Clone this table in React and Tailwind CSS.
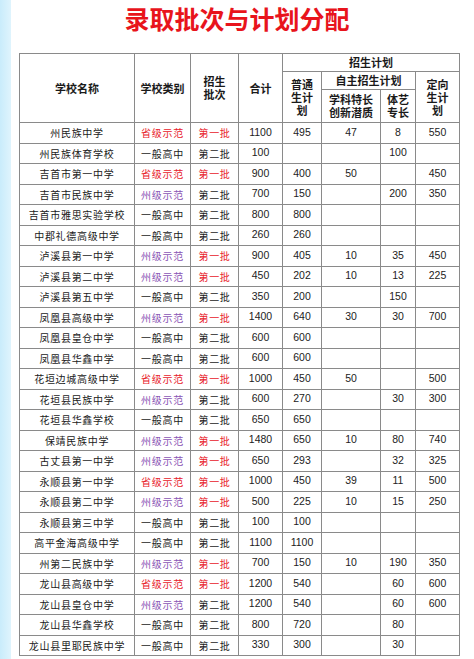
import React from "react";

const RED = "text-[#e8202a]";
const PURPLE = "text-[#8a55b5]";

const rows = [
  ["州民族中学", "省级示范", "第一批", "1100", "495", "47", "8", "550"],
  ["州民族体育学校", "一般高中", "第二批", "100", "", "", "100", ""],
  ["吉首市第一中学", "省级示范", "第一批", "900", "400", "50", "", "450"],
  ["吉首市民族中学", "州级示范", "第二批", "700", "150", "", "200", "350"],
  ["吉首市雅思实验学校", "一般高中", "第二批", "800", "800", "", "", ""],
  ["中郡礼德高级中学", "一般高中", "第二批", "260", "260", "", "", ""],
  ["泸溪县第一中学", "州级示范", "第一批", "900", "405", "10", "35", "450"],
  ["泸溪县第二中学", "州级示范", "第一批", "450", "202", "10", "13", "225"],
  ["泸溪县第五中学", "一般高中", "第二批", "350", "200", "", "150", ""],
  ["凤凰县高级中学", "州级示范", "第一批", "1400", "640", "30", "30", "700"],
  ["凤凰县皇仓中学", "一般高中", "第二批", "600", "600", "", "", ""],
  ["凤凰县华鑫中学", "一般高中", "第二批", "600", "600", "", "", ""],
  ["花垣边城高级中学", "省级示范", "第一批", "1000", "450", "50", "", "500"],
  ["花垣县民族中学", "州级示范", "第二批", "600", "270", "", "30", "300"],
  ["花垣县华鑫学校", "一般高中", "第二批", "650", "650", "", "", ""],
  ["保靖民族中学", "州级示范", "第一批", "1480", "650", "10", "80", "740"],
  ["古丈县第一中学", "州级示范", "第一批", "650", "293", "", "32", "325"],
  ["永顺县第一中学", "省级示范", "第一批", "1000", "450", "39", "11", "500"],
  ["永顺县第二中学", "州级示范", "第一批", "500", "225", "10", "15", "250"],
  ["永顺县第三中学", "一般高中", "第二批", "100", "100", "", "", ""],
  ["高平金海高级中学", "一般高中", "第二批", "1100", "1100", "", "", ""],
  ["州第二民族中学", "州级示范", "第一批", "700", "150", "10", "190", "350"],
  ["龙山县高级中学", "省级示范", "第一批", "1200", "540", "", "60", "600"],
  ["龙山县皇仓中学", "州级示范", "第二批", "1200", "540", "", "60", "600"],
  ["龙山县华鑫学校", "一般高中", "第二批", "800", "720", "", "80", ""],
  ["龙山县里耶民族中学", "一般高中", "第二批", "330", "300", "", "30", ""],
];

const typeColor = (t) => {
  if (t === "省级示范") return RED;
  if (t === "州级示范") return PURPLE;
  return "text-[#1a1a1a]";
};

const th = "border border-[#8a8a8a] font-bold text-[11px] text-[#1a1a1a] text-center align-middle p-0";
const td = "border border-[#8a8a8a] text-center align-middle p-0 h-[20.5px]";
const cjk = "text-[10px] tracking-[0.7px]";
const num = "text-[10.5px] font-['Liberation_Sans','Noto_Sans_CJK_SC',sans-serif] text-[#222]";

// header cell with stacked lines
const Lines = ({ items }) => (
  <div className="flex flex-col items-center">
    {items.map((s) => (
      <span key={s} className="block h-[13px] leading-[13px]">{s}</span>
    ))}
  </div>
);

export default function App() {
  return (
    <div className="w-[474px] h-[659px] bg-white flex overflow-hidden font-['Noto_Sans_CJK_SC',sans-serif]">
      {/* blue strip on the left */}
      <div className="w-[11px] shrink-0 bg-gradient-to-r from-[#c9ecfb] to-[#dff4fd]" />

      <div className="flex-1 flex flex-col">
        <h1 className="text-[25px] leading-[30px] font-bold text-[#e8141c] text-center mt-[3px] ml-[-11px]">
          录取批次与计划分配
        </h1>

        <table className="mt-[20px] ml-[8px] w-[440px] table-fixed border-collapse border-[1.5px] border-[#777]">
          <colgroup>
            <col className="w-[115px]" />
            <col className="w-[56px]" />
            <col className="w-[48px]" />
            <col className="w-[44px]" />
            <col className="w-[39px]" />
            <col className="w-[59px]" />
            <col className="w-[35px]" />
            <col className="w-[44px]" />
          </colgroup>
          <thead>
            <tr className="h-[18px]">
              <th rowSpan={3} className={th}>学校名称</th>
              <th rowSpan={3} className={th}>学校类别</th>
              <th rowSpan={3} className={th}><Lines items={["招生", "批次"]} /></th>
              <th rowSpan={3} className={th}>合计</th>
              <th colSpan={4} className={th}>招生计划</th>
            </tr>
            <tr className="h-[17.5px]">
              <th rowSpan={2} className={th}><Lines items={["普通", "生计", "划"]} /></th>
              <th colSpan={2} className={th}>自主招生计划</th>
              <th rowSpan={2} className={th}><Lines items={["定向", "生计", "划"]} /></th>
            </tr>
            <tr className="h-[33.5px]">
              <th className={th}><Lines items={["学科特长", "创新潜质"]} /></th>
              <th className={th}><Lines items={["体艺", "专长"]} /></th>
            </tr>
          </thead>
          <tbody>
            {rows.map((r) => (
              <tr key={r[0]}>
                <td className={`${td} ${cjk} text-[#1a1a1a]`}>{r[0]}</td>
                <td className={`${td} ${cjk} ${typeColor(r[1])}`}>{r[1]}</td>
                <td className={`${td} ${cjk} ${r[2] === "第一批" ? RED : "text-[#1a1a1a]"}`}>{r[2]}</td>
                <td className={`${td} ${num}`}>{r[3]}</td>
                <td className={`${td} ${num}`}>{r[4]}</td>
                <td className={`${td} ${num}`}>{r[5]}</td>
                <td className={`${td} ${num}`}>{r[6]}</td>
                <td className={`${td} ${num}`}>{r[7]}</td>
              </tr>
            ))}
          </tbody>
        </table>
      </div>
    </div>
  );
}
